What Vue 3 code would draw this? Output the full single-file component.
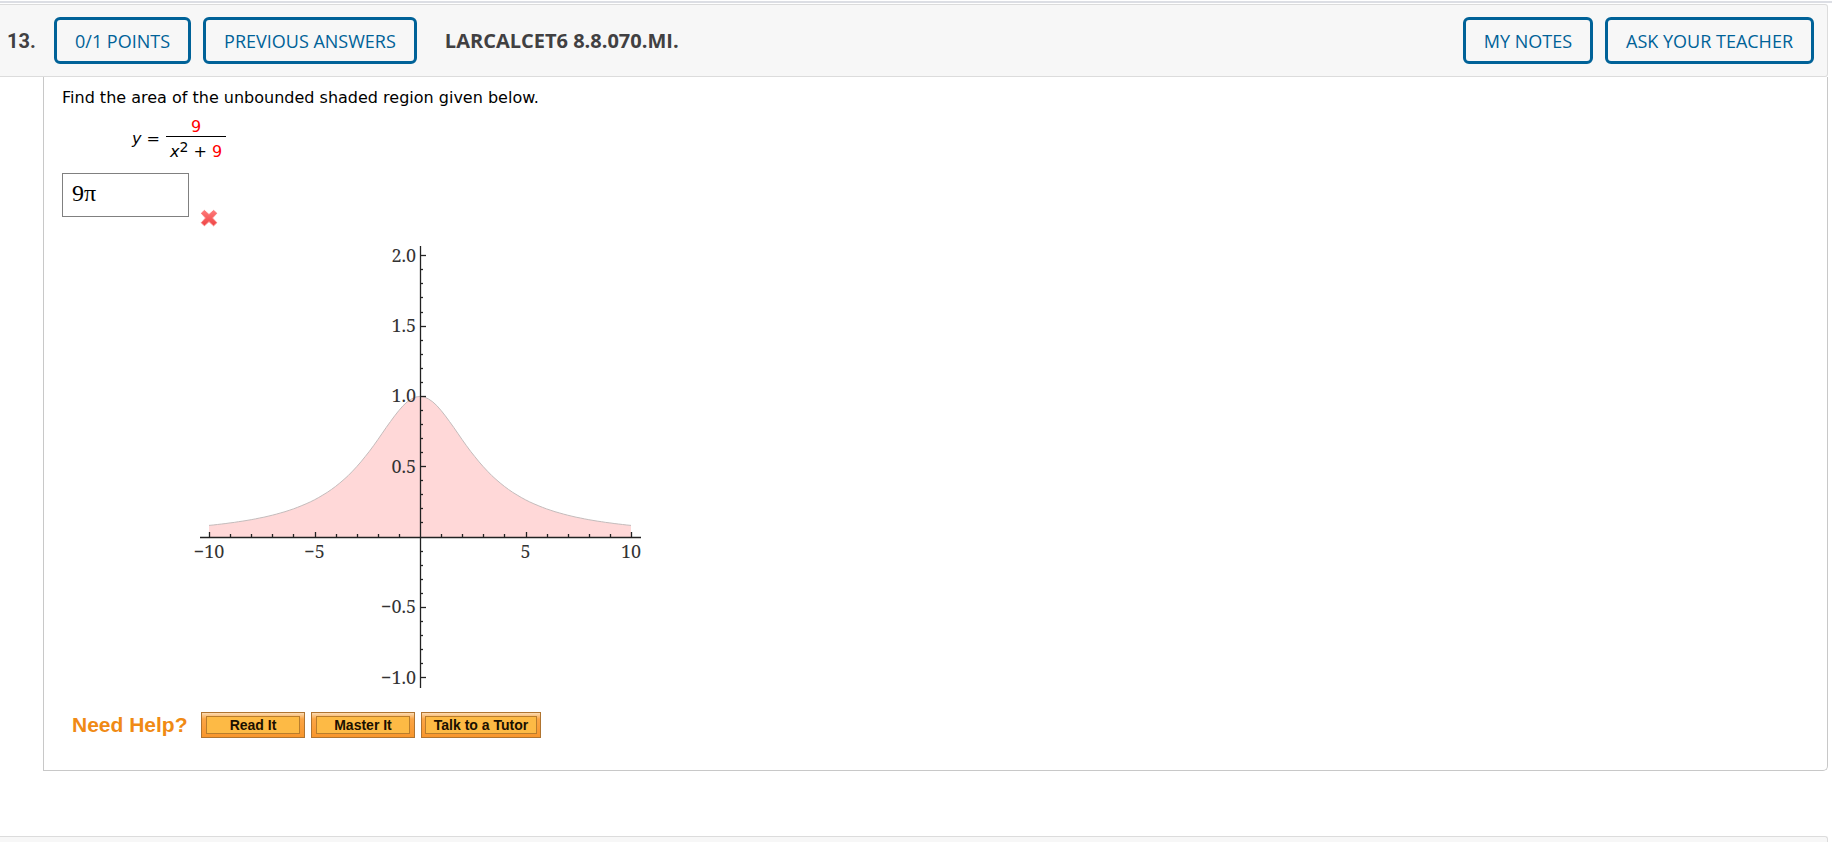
<script setup>
import { ref } from 'vue'

const answer = ref('9π')

const origin = { x: 358, y: 297 }
const unitX = 21.1
const unitY = 140.6
const px = (x) => origin.x + x * unitX
const py = (y) => origin.y - y * unitY
const snap = (v) => Math.round(v) + 0.5

const samples = Array.from({ length: 101 }, (_, i) => -10 + i * 0.2)
const curve = samples
  .map((x, i) => `${i ? 'L' : 'M'}${px(x).toFixed(1)} ${py(9 / (x * x + 9)).toFixed(1)}`)
  .join('')
const region = `${curve}L${px(10)} ${origin.y}L${px(-10)} ${origin.y}Z`

const xTicks = []
for (let n = -10; n <= 10; n++) {
  if (n) xTicks.push({ n, at: snap(px(n)), size: n % 5 ? 3 : 5 })
}
const yTicks = []
for (let n = -10; n <= 20; n++) {
  if (n) yTicks.push({ n, at: snap(py(n / 10) - 0.5), size: n % 5 ? 3 : 6 })
}
const label = (text) => String(text).replace('-', '−')
</script>

<template>
  <main class="page">
    <header class="bar">
      <span class="number">13.</span>
      <button type="button" class="pill">0/1 POINTS</button>
      <button type="button" class="pill">PREVIOUS ANSWERS</button>
      <h2 class="title">LARCALCET6 8.8.070.MI.</h2>
      <button type="button" class="pill notes">MY NOTES</button>
      <button type="button" class="pill">ASK YOUR TEACHER</button>
    </header>

    <section class="question">
      <p class="prompt">Find the area of the unbounded shaded region given below.</p>

      <div class="equation">
        <span class="left"><i>y</i> =</span>
        <span class="fraction">
          <span class="top red">9</span>
          <span class="bottom"><i>x</i><sup>2</sup> + <span class="red">9</span></span>
        </span>
      </div>

      <div class="answer">
        <input v-model="answer" type="text" aria-label="Answer" />
        <svg class="wrong" viewBox="0 0 18 18" role="img" aria-label="Incorrect">
          <defs>
            <linearGradient id="wrong-fill" x1="0" y1="0" x2="0" y2="1">
              <stop offset="0" stop-color="#ff7a7a" />
              <stop offset="1" stop-color="#ee4444" />
            </linearGradient>
          </defs>
          <path
            d="M4.4 1.4 9 5.6 13.6 1.4 16.8 4.3 12.4 9 16.8 13.7 13.6 16.8 9 12.5 4.4 16.8 1.3 13.7 5.6 9 1.3 4.3Z"
            fill="url(#wrong-fill)" stroke="#fa7878" stroke-width="1" stroke-linejoin="round"
          />
        </svg>
      </div>

      <svg class="graph" viewBox="0 0 590 456" role="img" aria-label="Graph of the shaded region">
        <path :d="region" fill="#ffd8d8" />
        <path :d="curve" fill="none" stroke="#c4bcbc" />
        <g stroke="#222" stroke-width="1.3">
          <path :d="`M138 ${origin.y + 0.5}H579`" />
          <path :d="`M${origin.x + 0.5} 6V448`" />
          <path
            v-for="t in xTicks" :key="t.n"
            :d="`M${t.at} ${origin.y}v${-t.size}`"
          />
          <path
            v-for="t in yTicks" :key="t.n"
            :d="`M${origin.x} ${t.at}h${t.size}`"
          />
        </g>
        <g class="labels" text-anchor="middle">
          <text v-for="n in [-10, -5, 5, 10]" :key="n" :x="px(n)" y="318">{{ label(n) }}</text>
        </g>
        <g class="labels" text-anchor="end">
          <text
            v-for="n in ['2.0', '1.5', '1.0', '0.5', '-0.5', '-1.0']" :key="n"
            x="354" :y="py(Number(n)) + 6"
          >{{ label(n) }}</text>
        </g>
      </svg>

      <div class="help">
        <strong>Need Help?</strong>
        <button type="button"><span>Read It</span></button>
        <button type="button"><span>Master It</span></button>
        <button type="button" class="wide"><span>Talk to a Tutor</span></button>
      </div>
    </section>

    <div class="next"></div>
  </main>
</template>

<style>
body {
  margin: 0;
  background: #fff;
}
</style>

<style scoped>
.page {
  box-sizing: border-box;
  height: 100vh;
  overflow: hidden;
  padding: 4px 4px 0 0;
  display: flex;
  flex-direction: column;
  background: linear-gradient(#fff 1px, #dcdee4 1px, #dcdee4 3px, #fff 3px);
  font-family: Verdana, "DejaVu Sans", sans-serif;
  font-size: 16px;
  color: #000;
}

.bar {
  display: flex;
  align-items: center;
  gap: 12px;
  padding: 12px 13px 12px 7px;
  border: 1px solid #dcdcdc;
  border-left: 0;
  border-radius: 0 3px 3px 0;
  background: #f7f7f7;
  font-family: "Open Sans", sans-serif;
}

.number {
  width: 35px;
  font: bold 20px Roboto, sans-serif;
  color: #414042;
}

.pill {
  box-sizing: border-box;
  height: 47px;
  padding: 0 18px;
  border: 3px solid #006298;
  border-radius: 6px;
  background: none;
  color: #006298;
  font: 500 18px "Open Sans", sans-serif;
}

.title {
  margin: 0 0 0 16px;
  font-size: 20px;
  line-height: 24px;
  font-weight: 700;
  color: #414042;
}

.notes {
  margin-left: auto;
}

.question {
  margin-left: 43px;
  padding: 9px 18px 32px;
  border: 1px solid #c8c8c8;
  border-top: 0;
  border-radius: 0 0 5px 0;
}

.prompt {
  margin: 0;
  line-height: 24px;
}

.equation {
  display: flex;
  align-items: center;
  gap: 6px;
  margin: 8px 0 11px 70px;
}

.left {
  padding-bottom: 4px;
}

.fraction {
  display: flex;
  flex-direction: column;
  text-align: center;
  line-height: 20px;
}

.top {
  line-height: 18px;
  border-bottom: 1px solid #000;
}

.bottom {
  padding: 5px 4px 0;
}

.bottom sup {
  font-size: 14px;
  line-height: 0;
  vertical-align: 5px;
}

.red {
  color: #f00;
}

.top.red {
  border-color: #000;
}

.answer {
  display: flex;
  align-items: flex-end;
  gap: 11px;
}

.answer input {
  box-sizing: border-box;
  width: 127px;
  height: 44px;
  padding: 0 9px 3px;
  border: 1px solid #808080;
  font: 24px "Liberation Serif", serif;
}

.wrong {
  width: 18px;
  height: 18px;
  margin-bottom: -10px;
}

.graph {
  display: block;
  width: 590px;
  height: 456px;
  margin-top: 23px;
}

.labels {
  font: 18px "Noto Serif", "DejaVu Serif", serif;
  fill: #333;
}

.help {
  display: flex;
  align-items: center;
  gap: 6px;
  margin: 16px 0 0 10px;
  font-family: "Liberation Sans", Arial, sans-serif;
}

.help strong {
  width: 123px;
  font-size: 21px;
  line-height: 24px;
  color: #f08a14;
}

.help button {
  width: 104px;
  height: 26px;
  padding: 3px 4px;
  border: 1px solid #b07430;
  background: linear-gradient(#fbdcb4, #fba545 6px, #f8962c);
  color: #1a1000;
  font: bold 14px "Liberation Sans", Arial, sans-serif;
}

.help button.wide {
  width: 120px;
  padding: 3px;
}

.help button span {
  display: block;
  padding-top: 1px;
  border: 1px solid #b97d2c;
  background: #fdba45;
  line-height: 15px;
  white-space: nowrap;
}

.next {
  flex: 1;
  margin-top: 65px;
  border: 1px solid #dcdcdc;
  border-width: 1px 1px 0 0;
  border-radius: 0 3px 0 0;
  background: #f7f7f7;
}
</style>
